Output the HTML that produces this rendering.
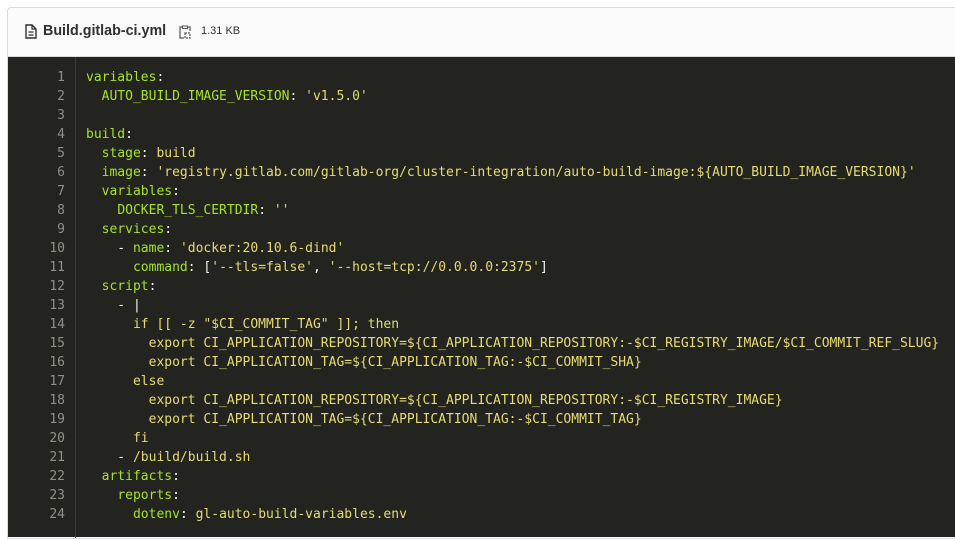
<!DOCTYPE html>
<html><head><meta charset="utf-8"><style>
html,body{margin:0;padding:0;background:#fff;width:955px;height:526px;overflow:hidden}
.card{position:absolute;left:7px;top:7px;width:960px;height:530px;border:1px solid #dbdbdb;border-radius:4px 0 0 0;overflow:hidden}
.hdr{height:48px;background:#fafafa;border-bottom:1px solid #dbdbdb;position:relative;font-family:"Liberation Sans",sans-serif}
.hdr .name{position:absolute;left:35px;top:15px;font-weight:bold;font-size:14.3px;color:#303030}
.hdr .size{position:absolute;left:193px;top:17px;font-size:11px;color:#303030}
.code{background:#23241f;height:480px;position:relative;font-family:"DejaVu Sans Mono","Liberation Mono",monospace;font-size:13px;line-height:19px}
.gut{position:absolute;left:0;top:0;width:67px;height:100%;border-right:1px solid #3a3b36;color:#8f908a;text-align:right;padding-top:11px}
.gut div{padding-right:10px}
pre{margin:0;position:absolute;left:78px;top:11px;font:inherit;color:#f8f8f2;white-space:pre}
.k{color:#a6e22e}.s{color:#e6db74}
</style></head><body>
<div class="card">
<div class="hdr">
<svg style="position:absolute;left:17px;top:16px" width="12" height="15" viewBox="0 0 12 15"><path d="M1 1h6l4 4v9H1z" fill="none" stroke="#303030" stroke-width="1.4"/><path d="M7 1v4h4M3.5 8h5M3.5 11h5" fill="none" stroke="#303030" stroke-width="1.2"/></svg>
<span class="name">Build.gitlab-ci.yml</span>
<svg style="position:absolute;left:171px;top:17px" width="12" height="14" viewBox="0 0 12 14"><path d="M3 2H1v11h4M9 2h2v4" fill="none" stroke="#555" stroke-width="1.2"/><rect x="3.5" y="1" width="5" height="2.5" fill="none" stroke="#555" stroke-width="1"/><rect x="6" y="8" width="5" height="5" fill="none" stroke="#555" stroke-width="1.2" stroke-dasharray="2 1"/></svg>
<span class="size">1.31 KB</span>
</div>
<div class="code">
<div class="gut"><div>1</div><div>2</div><div>3</div><div>4</div><div>5</div><div>6</div><div>7</div><div>8</div><div>9</div><div>10</div><div>11</div><div>12</div><div>13</div><div>14</div><div>15</div><div>16</div><div>17</div><div>18</div><div>19</div><div>20</div><div>21</div><div>22</div><div>23</div><div>24</div></div>
<pre><span class="k">variables</span>:
  <span class="k">AUTO_BUILD_IMAGE_VERSION</span>: <span class="s">'v1.5.0'</span>

<span class="k">build</span>:
  <span class="k">stage</span>: <span class="s">build</span>
  <span class="k">image</span>: <span class="s">'registry.gitlab.com/gitlab-org/cluster-integration/auto-build-image:${AUTO_BUILD_IMAGE_VERSION}'</span>
  <span class="k">variables</span>:
    <span class="k">DOCKER_TLS_CERTDIR</span>: <span class="s">''</span>
  <span class="k">services</span>:
    - <span class="k">name</span>: <span class="s">'docker:20.10.6-dind'</span>
      <span class="k">command</span>: [<span class="s">'--tls=false'</span>, <span class="s">'--host=tcp://0.0.0.0:2375'</span>]
  <span class="k">script</span>:
    - |
<span class="s">      if [[ -z "$CI_COMMIT_TAG" ]]; then
        export CI_APPLICATION_REPOSITORY=${CI_APPLICATION_REPOSITORY:-$CI_REGISTRY_IMAGE/$CI_COMMIT_REF_SLUG}
        export CI_APPLICATION_TAG=${CI_APPLICATION_TAG:-$CI_COMMIT_SHA}
      else
        export CI_APPLICATION_REPOSITORY=${CI_APPLICATION_REPOSITORY:-$CI_REGISTRY_IMAGE}
        export CI_APPLICATION_TAG=${CI_APPLICATION_TAG:-$CI_COMMIT_TAG}
      fi</span>
    - <span class="s">/build/build.sh</span>
  <span class="k">artifacts</span>:
    <span class="k">reports</span>:
      <span class="k">dotenv</span>: <span class="s">gl-auto-build-variables.env</span></pre>
</div>
</div>
</body></html>
